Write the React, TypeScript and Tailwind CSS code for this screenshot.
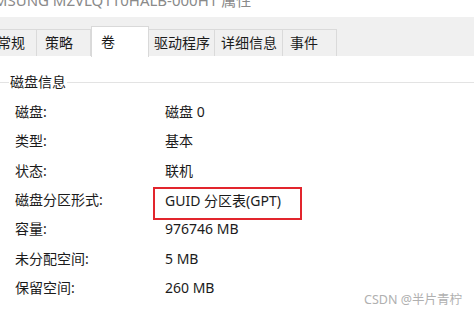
import React from 'react';

const font = { fontFamily: '"Noto Sans", "Noto Sans CJK SC", sans-serif' };

const tabs = [
  { label: '常规', w: 'w-[49px]', pl: 'pl-[9px]' },
  { label: '策略', w: 'w-[54px]', pl: 'pl-[8px]' },
  { label: '卷', w: 'w-[58px]', pl: 'pl-[9px]', active: true },
  { label: '驱动程序', w: 'w-[66px]', pl: 'pl-[5px]' },
  { label: '详细信息', w: 'w-[68px]', pl: 'pl-[6px]' },
  { label: '事件', w: 'w-[54px]', pl: 'pl-[7px]' },
];

const rows = [
  { k: '磁盘:', v: '磁盘 0' },
  { k: '类型:', v: '基本' },
  { k: '状态:', v: '联机' },
  { k: '磁盘分区形式:', v: 'GUID 分区表(GPT)', mark: true },
  { k: '容量:', v: '976746 MB' },
  { k: '未分配空间:', v: '5 MB' },
  { k: '保留空间:', v: '260 MB' },
];

export default function App() {
  return (
    <div
      className="relative w-[474px] h-[315px] overflow-hidden bg-white text-[#1b1b1b]"
      style={font}
    >
      {/* window title, cut off at top */}
      <div className="h-[17px] overflow-hidden">
        <div className="-mt-[10px] -ml-[24px] whitespace-nowrap text-[15px] leading-[20px] text-[#8a8a8a]">
          SAMSUNG MZVLQ1T0HALB-000H1 属性
        </div>
      </div>

      {/* tab strip */}
      <div className="h-[39px] bg-[#f0f0f0] flex items-end -ml-[12px]">
        {tabs.map((t) =>
          t.active ? (
            <div
              key={t.label}
              className={`${t.w} ${t.pl} h-[31px] -mb-[1px] bg-white border-x border-t border-[#d9d9d9] text-[14px] leading-[30px]`}
            >
              {t.label}
            </div>
          ) : (
            <div
              key={t.label}
              className={`${t.w} ${t.pl} h-[27px] border-t border-r border-[#dadada] text-[14px] leading-[26px]`}
            >
              {t.label}
            </div>
          )
        )}
      </div>

      {/* group box */}
      <div className="mt-[16px] flex items-center">
        <div className="w-[9px] h-px bg-[#e3e3e3]" />
        <div className="px-[1px] text-[14px] leading-[20px]">磁盘信息</div>
        <div className="flex-1 h-px bg-[#e3e3e3]" />
      </div>
      <div className="pt-[5px] text-[14px]">
        {rows.map((r) => (
          <div key={r.k} className="h-[29.3px] flex items-center">
            <div className="w-[165px] pl-[15px]">{r.k}</div>
            {r.mark ? (
              <div className="-ml-[12px] mt-[7px] w-[149px] h-[33px] pl-[10px] border-2 border-[#e2252d] flex items-center pb-[6px]">
                {r.v}
              </div>
            ) : (
              <div>{r.v}</div>
            )}
          </div>
        ))}
      </div>

      <div className="absolute right-[12px] bottom-[8px] text-[12.5px] leading-[14px] text-[#b0b0b0]">
        CSDN @半片青柠
      </div>
    </div>
  );
}
